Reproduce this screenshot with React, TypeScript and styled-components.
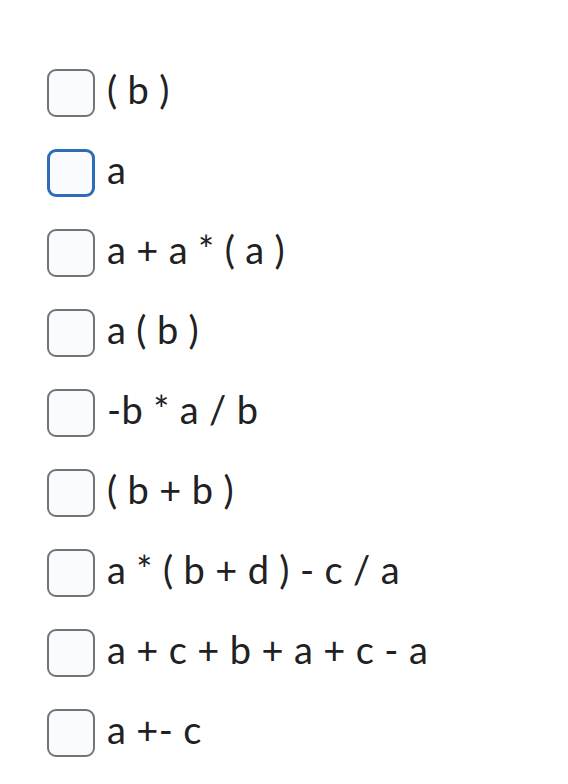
import React from "react";
import styled, { createGlobalStyle } from "styled-components";

const Global = createGlobalStyle`
  html, body { margin: 0; padding: 0; background: #ffffff; }
  body { font-family: Lato, "Noto Sans", sans-serif; }
`;

const List = styled.div`
  display: flex;
  flex-direction: column;
  gap: 32px;
  padding: 69px 0 0 47px;
`;

const Row = styled.label`
  display: flex;
  align-items: center;
  gap: 12px;
  height: 48px;
`;

const Box = styled.span<{ $focused?: boolean }>`
  box-sizing: border-box;
  width: 48px;
  height: 48px;
  flex: 0 0 auto;
  border-radius: 9px;
  background: #f9fbff;
  border: ${(p) => (p.$focused ? "3.5px solid #2f6cb8" : "2px solid #6f7477")};
`;

const Text = styled.span`
  font-family: Lato, "Noto Sans", sans-serif;
  font-size: 38px;
  line-height: 48px;
  margin-bottom: 8px;
  color: #1f2123;
  letter-spacing: 0.35px;
  white-space: pre;
`;

const items = [
  "( b )",
  "a",
  "a + a * ( a )",
  "a ( b )",
  "-b * a / b",
  "( b + b )",
  "a * ( b + d ) - c / a",
  "a + c + b + a + c - a",
  "a +- c",
];

export default function App() {
  return (
    <>
      <Global />
      <List>
        {items.map((t, i) => (
          <Row key={i}>
            <Box $focused={i === 1} />
            <Text>{t}</Text>
          </Row>
        ))}
      </List>
    </>
  );
}
